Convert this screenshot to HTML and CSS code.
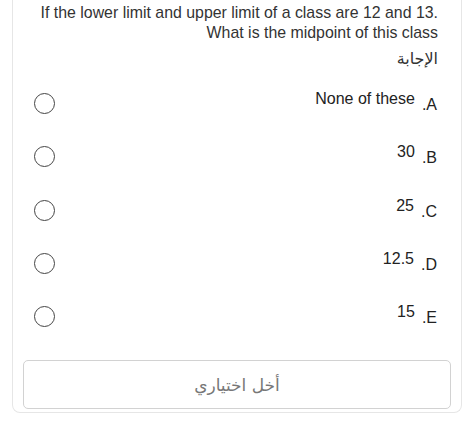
FILE: index.html
```html
<!DOCTYPE html>
<html lang="en">

<head>
    <meta charset="UTF-8">
    <meta name="viewport" content="width=device-width, initial-scale=1.0">
    <title>Question</title>
    <link rel="stylesheet" href="styles.css">
</head>

<body>
    <div class="card">
        <div class="question">
            <p class="question-text">If the lower limit and upper limit of a class are 12 and 13.<br>What is the midpoint of this class</p>
            <p class="answer-title" dir="rtl">الإجابة</p>
        </div>

        <ul class="options">
            <li class="option">
                <span class="radio"></span>
                <span class="option-text">None of these<span class="option-label">.A</span></span>
            </li>
            <li class="option">
                <span class="radio"></span>
                <span class="option-text">30<span class="option-label">.B</span></span>
            </li>
            <li class="option">
                <span class="radio"></span>
                <span class="option-text">25<span class="option-label">.C</span></span>
            </li>
            <li class="option">
                <span class="radio"></span>
                <span class="option-text">12.5<span class="option-label">.D</span></span>
            </li>
            <li class="option">
                <span class="radio"></span>
                <span class="option-text">15<span class="option-label">.E</span></span>
            </li>
        </ul>

        <button class="clear-btn" type="button" dir="rtl">أخل اختياري</button>
    </div>
</body>

</html>
```

FILE: styles.css
```css
body {
    margin: 0;
    background-color: #fff;
    font-family: "Liberation Sans", "DejaVu Sans", sans-serif;
    color: #333;
}

.card {
    margin: 0 12px;
    padding: 0 10px 3px;
    border: 1px solid #e6e6e6;
    border-top: none;
    border-radius: 0 0 8px 8px;
}

.question {
    padding: 3px 13px 0 0;
    text-align: right;
}

.question-text {
    margin: 0;
    font-size: 15.9px;
    line-height: 20px;
}

.answer-title {
    margin: 5px 0 0;
    font-size: 16px;
    line-height: 22px;
}

.options {
    list-style: none;
    margin: 7px 0 0;
    padding: 0;
}

.option {
    display: flex;
    align-items: center;
    justify-content: space-between;
    height: 53.3px;
    padding: 0 14px 0 11px;
}

.radio {
    width: 19px;
    height: 19px;
    border: 1.6px solid #444;
    border-radius: 50%;
}

.option-text {
    font-size: 16px;
    line-height: 20px;
    color: #222;
    margin-top: -3px;
}

.option-label {
    margin-left: 7px;
    vertical-align: -6px;
}

.clear-btn {
    display: block;
    width: 100%;
    height: 49px;
    margin-top: 17px;
    background-color: #fff;
    border: 1px solid #d2d2d2;
    border-radius: 5px;
    font-family: "DejaVu Sans", sans-serif;
    font-size: 17px;
    color: #777;
}
```
